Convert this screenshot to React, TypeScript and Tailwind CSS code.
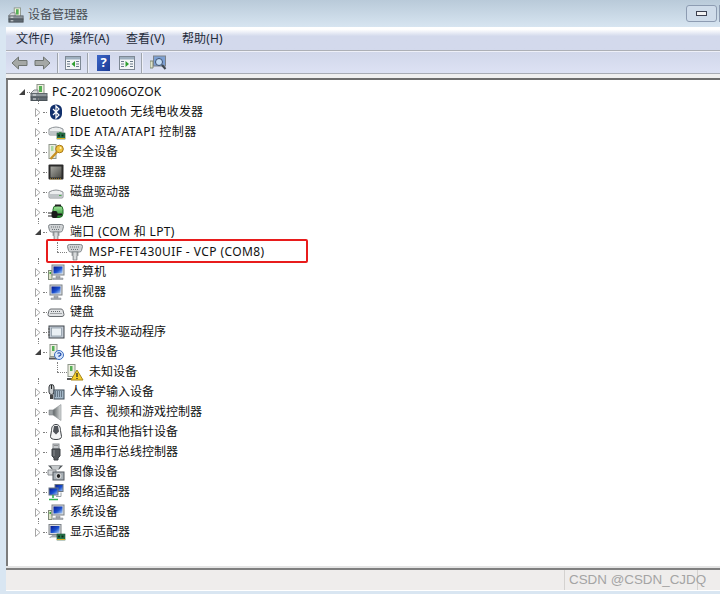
import React from 'react';

type IconName =
  | 'pc' | 'bluetooth' | 'ide' | 'key' | 'cpu' | 'disk' | 'battery' | 'port' | 'computer' | 'monitor'
  | 'keyboard' | 'memory' | 'otherq' | 'otherw' | 'hid' | 'sound' | 'mouse' | 'usb' | 'camera' | 'network'
  | 'system' | 'display';

type Row = { label: string; icon: IconName; state?: 'open' | 'closed' | 'root' | 'child'; track?: string };

const ROWS: Row[] = [
  { label: 'PC-20210906OZOK', icon: 'pc', state: 'root', track: 'tracking-[0.2px]' },
  { label: 'Bluetooth 无线电收发器', icon: 'bluetooth', track: 'tracking-[0.15px]' },
  { label: 'IDE ATA/ATAPI 控制器', icon: 'ide', track: 'tracking-[0.5px]' },
  { label: '安全设备', icon: 'key' },
  { label: '处理器', icon: 'cpu' },
  { label: '磁盘驱动器', icon: 'disk' },
  { label: '电池', icon: 'battery' },
  { label: '端口 (COM 和 LPT)', icon: 'port', state: 'open', track: 'tracking-[0.3px]' },
  { label: 'MSP-FET430UIF - VCP (COM8)', icon: 'port', state: 'child', track: 'tracking-[0.42px]' },
  { label: '计算机', icon: 'computer' },
  { label: '监视器', icon: 'monitor' },
  { label: '键盘', icon: 'keyboard' },
  { label: '内存技术驱动程序', icon: 'memory' },
  { label: '其他设备', icon: 'otherq', state: 'open' },
  { label: '未知设备', icon: 'otherw', state: 'child' },
  { label: '人体学输入设备', icon: 'hid' },
  { label: '声音、视频和游戏控制器', icon: 'sound' },
  { label: '鼠标和其他指针设备', icon: 'mouse' },
  { label: '通用串行总线控制器', icon: 'usb' },
  { label: '图像设备', icon: 'camera' },
  { label: '网络适配器', icon: 'network' },
  { label: '系统设备', icon: 'system' },
  { label: '显示适配器', icon: 'display' },
];

const Defs = () => (
  <defs>
    <linearGradient id="scr" x1="0" y1="0" x2="1" y2="1">
      <stop offset="0" stopColor="#06188c" />
      <stop offset=".55" stopColor="#1a50d0" />
      <stop offset="1" stopColor="#b4d4f4" />
    </linearGradient>
    <linearGradient id="chip" x1="0" y1="0" x2="1" y2="1">
      <stop offset="0" stopColor="#a8a8a2" />
      <stop offset="1" stopColor="#4a4a46" />
    </linearGradient>
    <linearGradient id="metal" x1="0" y1="0" x2="1" y2="0">
      <stop offset="0" stopColor="#8a8e90" />
      <stop offset=".5" stopColor="#e8eaeb" />
      <stop offset="1" stopColor="#8a8e90" />
    </linearGradient>
    <linearGradient id="cone" x1="0" y1="0" x2="1" y2="0">
      <stop offset="0" stopColor="#5c6264" />
      <stop offset="1" stopColor="#dadddd" />
    </linearGradient>
    <linearGradient id="batt" x1="0" y1="0" x2="0" y2="1">
      <stop offset="0" stopColor="#a8e8a0" />
      <stop offset="1" stopColor="#1e8a2a" />
    </linearGradient>
  </defs>
);

const Screen = ({ x = 3, y = 1 }: { x?: number; y?: number }) => (
  <g>
    <rect x={x} y={y} width="12" height="10" fill="#d8dadc" stroke="#7c8288" />
    <rect x={x + 1.5} y={y + 1.5} width="9" height="7" fill="url(#scr)" />
    <path d={`M${x + 4} ${y + 11}h4v2h-4zM${x + 1} ${y + 13}h10v1.5h-10z`} fill="#b4b8bc" stroke="#80868c" strokeWidth=".5" />
  </g>
);

const Tower = ({ x = 0 }: { x?: number }) => (
  <g>
    <rect x={x + .5} y="6.5" width="3.5" height="9" fill="#dfe3c8" stroke="#7f8a78" />
    <path d={`M${x + 1.5} 8h1.5v2h-1.5z`} fill="#3aa63a" />
  </g>
);

const Drive = ({ y = 7 }: { y?: number }) => (
  <g>
    <path d={`M1 ${y + 2}q7-4 14 0v5q0 1-1 1H2q-1 0-1-1z`} fill="#eceeef" stroke="#8d9296" />
    <path d={`M1.5 ${y + 4}h13v3h-13z`} fill="#bfc4c7" />
    <path d={`M11 ${y + 5.5}h2.5`} stroke="#4caa4c" />
  </g>
);

const Card = ({ x = 8, y = 10 }: { x?: number; y?: number }) => (
  <g>
    <rect x={x} y={y} width="8" height="6" fill="#2a7a4e" stroke="#1c4e34" strokeWidth=".6" />
    <path d={`M${x + 1} ${y + 1.5}h2v2h-2zM${x + 4.5} ${y + 1.5}h2v2h-2z`} fill="#0e2a1c" />
    <path d={`M${x} ${y + 5.5}h8`} stroke="#e0b020" />
  </g>
);

const PcBody = () => (
  <g>
    <rect x="7" y="0.5" width="7" height="10" fill="#eef0dc" stroke="#8d958a" />
    <rect x="9" y="2" width="3" height="6" fill="#55b055" />
    <path d="M1 9l3-3h4v4H1z" fill="#d6d8da" stroke="#7d8286" />
    <rect x="1" y="9.5" width="16" height="3.5" fill="#8e969c" stroke="#5e666c" />
    <rect x="1" y="13" width="16" height="3.5" fill="#606a72" stroke="#4a5258" />
    <path d="M3 11h3M3 15h3" stroke="#e8eaec" />
  </g>
);

function Icon({ name }: { name: IconName }) {
  const inner: Record<IconName, React.ReactNode> = {
    pc: <PcBody />,
    bluetooth: (
      <g>
        <rect x="2" y="0.5" width="12" height="15" rx="5.5" fill="#12306c" />
        <path d="M5 5l6 6-3 3V2l3 3-6 6" fill="none" stroke="#fff" strokeWidth="1.2" />
      </g>
    ),
    ide: <g><Drive y={3} /><Card x={9} y={9} /></g>,
    key: (
      <g>
        <rect x="1" y="0.5" width="7" height="14" fill="#eceee0" stroke="#8d958a" />
        <rect x="3" y="2" width="2.5" height="5" fill="#a8d8a0" />
        <circle cx="11.5" cy="5" r="3.8" fill="#f2c440" stroke="#a87818" />
        <circle cx="12.5" cy="4" r="1" fill="#fff2c0" />
        <path d="M9 8l-6.5 7" stroke="#c89020" strokeWidth="2.2" />
      </g>
    ),
    cpu: (
      <g>
        <rect x="0.5" y="0.5" width="15" height="15" rx="1" fill="#2a2a2a" />
        <rect x="2.5" y="2.5" width="11" height="11" fill="url(#chip)" />
        <path d="M2 15h12" stroke="#d0a030" strokeDasharray="1 1" />
      </g>
    ),
    disk: <Drive y={6} />,
    battery: (
      <g>
        <rect x="5" y="1.5" width="10" height="12" rx="4" fill="url(#batt)" stroke="#1e6a24" />
        <path d="M7 0.5h6v2H7z" fill="#222" />
        <path d="M0 9h4M0 12h4" stroke="#222" strokeWidth="1.2" />
        <rect x="3.5" y="7" width="6" height="7" rx="2" fill="#1a1a1a" />
        <path d="M9 10.5h5" stroke="#1a1a1a" strokeWidth="2" />
      </g>
    ),
    port: (
      <g>
        <path d="M0.5 2.5q0-2 2-2h11q2 0 2 2l-1 4q-.5 1.5-2 1.5H3.5q-1.5 0-2-1.5z" fill="#cfd2d4" stroke="#7e8488" />
        <path d="M3 3h10M4 5.5h8" stroke="#6c7276" strokeDasharray="1 1" />
        <path d="M5 8h6v3.5l-1 1v3.5H6v-3.5l-1-1z" fill="url(#metal)" stroke="#7e8488" strokeWidth=".7" />
      </g>
    ),
    computer: <g><Tower /><Screen x={4} /></g>,
    monitor: <Screen x={2} />,
    keyboard: (
      <g>
        <path d="M3 5h10q1.5 0 2 1.5l1 4q0 2-2 2H2q-2 0-2-2l1-4Q1.5 5 3 5z" fill="#e2e4e6" stroke="#686c70" />
        <path d="M3 7.5h10M2.5 9.5h11" stroke="#5f6468" strokeDasharray="1 1" />
      </g>
    ),
    memory: (
      <g>
        <rect x="1" y="2" width="15" height="12" fill="#c4ccd6" stroke="#3e444a" />
        <rect x="3.5" y="4" width="10" height="8" fill="#eaf0f4" stroke="#84929e" strokeWidth=".7" />
        <path d="M0 5h2M0 8h2M0 11h2" stroke="#555" />
      </g>
    ),
    otherq: (
      <g>
        <rect x="2" y="0.5" width="7" height="12" fill="#eceee0" stroke="#8d958a" />
        <rect x="4" y="2" width="2.5" height="5" fill="#55b055" />
        <path d="M1 14.5h8" stroke="#555" strokeWidth="2" />
        <circle cx="11" cy="11" r="4.5" fill="#d8e6fa" stroke="#3a6cc0" />
        <path d="M9.5 9.5q1.5-1.5 3 0t-1.5 2.5v1" fill="none" stroke="#1c48a8" strokeWidth="1.1" />
      </g>
    ),
    otherw: (
      <g>
        <rect x="1" y="0.5" width="7" height="12" fill="#eceee0" stroke="#8d958a" />
        <rect x="3" y="2" width="2.5" height="5" fill="#55b055" />
        <path d="M0 15h6" stroke="#555" strokeWidth="2" />
        <path d="M10 6l6 10H4z" fill="#f5cf2c" stroke="#a8861a" />
        <path d="M10 9v4M10 14v1" stroke="#222" strokeWidth="1.2" />
      </g>
    ),
    hid: (
      <g>
        <rect x="1" y="0.5" width="5" height="10" rx="2.5" fill="#c8ccce" stroke="#33373a" />
        <path d="M3.5 1v4" stroke="#222" />
        <path d="M2 11h3v4H2z" fill="#444" />
        <rect x="6" y="6" width="10" height="9" fill="#a4b8c8" stroke="#3e4c58" />
        <path d="M7 8h8M7 10h8M7 12h8" stroke="#26323e" strokeDasharray="1 1" />
      </g>
    ),
    sound: (
      <g>
        <path d="M1 6h4v5H1z" fill="#9ca2a4" stroke="#7c8284" strokeWidth=".6" />
        <path d="M5 6l8-5.5v16L5 11z" fill="url(#cone)" stroke="#8c9294" strokeWidth=".6" />
      </g>
    ),
    mouse: (
      <g>
        <path d="M8 0.5c3.5 0 4.5 3 4.5 6l1 6c0 2-2 3-5.5 3s-5.5-1-5.5-3l1-6c0-3 1-6 4.5-6z" fill="#f4f5f6" stroke="#3c4044" />
        <path d="M6 2h4l1 5.5-3 3-3-3z" fill="#50545a" />
      </g>
    ),
    usb: (
      <g>
        <rect x="5" y="0" width="6" height="5" fill="#c6c9cc" stroke="#8a8e92" />
        <path d="M6.5 1.5h1M8.5 1.5h1" stroke="#555" />
        <path d="M4 5h8v7l-2 2v2H6v-2l-2-2z" fill="#55595d" stroke="#3c4044" />
        <path d="M6 6v6" stroke="#8a8e92" />
      </g>
    ),
    camera: (
      <g>
        <path d="M0 1.5h15l-4 4H4z" fill="#50565a" />
        <path d="M3 2l2 4h5l2-4z" fill="#c6cacc" />
        <path d="M0 6h8v5H0z" fill="#d6d9db" stroke="#8a8e92" />
        <rect x="5" y="8" width="11" height="8" fill="#a8b0b6" stroke="#545a60" />
        <circle cx="10.5" cy="12" r="2.4" fill="#222" stroke="#eee" />
      </g>
    ),
    network: (
      <g>
        <rect x="7" y="0.5" width="8" height="7" fill="url(#scr)" stroke="#6a7480" />
        <rect x="1" y="4" width="9" height="7" fill="url(#scr)" stroke="#6a7480" />
        <path d="M5 11v3M1 15.5h9" stroke="#30b050" strokeWidth="1.6" />
        <path d="M8 12.5h5v-4" fill="none" stroke="#9aa2a8" />
      </g>
    ),
    system: <g><Tower /><Screen x={4} /></g>,
    display: (
      <g>
        <rect x="1" y="0.5" width="12" height="10" fill="#d8dadc" stroke="#7c8288" />
        <rect x="2.5" y="2" width="9" height="7" fill="url(#scr)" />
        <path d="M4 11h5v2H2v1" fill="#b4b8bc" stroke="#80868c" strokeWidth=".6" />
        <Card x={9} y={10} />
      </g>
    ),
  };
  return (
    <svg width="16" height="16" viewBox="0 0 16 16" className="shrink-0 overflow-visible">
      <Defs />
      {inner[name]}
    </svg>
  );
}

// expander triangles and dotted connectors of one row
function Expander({ state }: { state?: Row['state'] }) {
  if (state === 'open') {
    return (
      <svg width="8" height="8" viewBox="0 0 8 8" className="shrink-0">
        <path d="M1 7h6V1z" fill="#404040" />
      </svg>
    );
  }
  return (
    <svg width="8" height="11" viewBox="0 0 8 11" className="shrink-0">
      <path d="M1.5 1.5l4.5 4-4.5 4z" fill="#fff" stroke="#a6a6a6" />
    </svg>
  );
}

function TreeRow({ row }: { row: Row }) {
  if (row.state === 'root') {
    return (
      <div className="relative flex h-5 items-center">
        <span className="flex w-[8px] justify-center"><Expander state="open" /></span>
        <span className="ml-[1px] w-[3px] border-t border-dotted border-[#808080]" />
        <span className="flex w-[16px]"><Icon name={row.icon} /></span>
        <span className={`ml-[6px] text-[12px] text-[#111] ${row.track ?? ''}`}>{row.label}</span>
      </div>
    );
  }
  if (row.state === 'child') {
    return (
      <div className="relative flex h-5 items-center pl-[39px]">
        <span className="absolute left-[39px] top-0 h-[10px] border-l border-dotted border-[#808080]" />
        <span className="w-[10px] border-t border-dotted border-[#808080]" />
        <span className="flex w-[16px]"><Icon name={row.icon} /></span>
        <span className={`ml-[6px] text-[12px] text-[#111] ${row.track ?? ''}`}>{row.label}</span>
      </div>
    );
  }
  return (
    <div className="relative flex h-5 items-center pl-[16px]">
      <span className="absolute left-[20px] top-[-4px] h-[6px] border-l border-dotted border-[#808080]" />
      <span className="flex w-[8px] items-center justify-center"><Expander state={row.state} /></span>
      <span className="ml-[1px] w-[4px] border-t border-dotted border-[#808080]" />
      <span className="ml-[1px] flex w-[17px]"><Icon name={row.icon} /></span>
      <span className={`ml-[5px] text-[12px] text-[#111] ${row.track ?? ''}`}>{row.label}</span>
    </div>
  );
}

const Sep = () => <span className="block h-[20px] w-px bg-[#9ea4ac] shadow-[1px_0_0_#eef0f8]" />;

const PaneIcon = ({ arrow }: { arrow: 'left' | 'right' }) => (
  <svg width="16" height="14" viewBox="0 0 16 14" className="block">
    <rect x=".5" y=".5" width="15" height="13" fill="#f4f6f8" stroke="#7d8894" />
    <path d="M1 1h14v2.5H1z" fill="#9fb0c0" />
    <path d="M2 5.5h3M2 8h3M2 10.5h3M11 5.5h3M11 8h3M11 10.5h3" stroke="#6a7a8a" />
    {arrow === 'left'
      ? <path d="M6.5 8l3.5-3v6z" fill="#30a030" />
      : <path d="M10 8L6.5 5v6z" fill="#30a030" />}
  </svg>
);

const NavArrow = ({ dir }: { dir: 'left' | 'right' }) => (
  <svg width="17" height="14" viewBox="0 0 17 14" className="block">
    <path
      d={dir === 'left' ? 'M1 7l6.5-6v3.5H16v5H7.5V13z' : 'M16 7L9.5 1v3.5H1v5h8.5V13z'}
      fill="#a5a8a6"
      stroke="#6f7471"
    />
  </svg>
);

export default function App() {
  return (
    <div
      className="flex h-[594px] w-[720px] flex-col overflow-hidden bg-[#d9e6f2] text-[12px]"
      style={{ fontFamily: '"Noto Sans", "Noto Sans CJK SC", sans-serif' }}
    >
      {/* title bar */}
      <div className="flex h-[27px] items-center bg-gradient-to-b from-[#b9cad9] to-[#d7e5f1] pl-[8px] pt-[3px]">
        <span className="w-[20px]"><svg width="16" height="16" viewBox="0 0 18 17" className="block"><PcBody /></svg></span>
        <span className="text-[12px] text-[#4a4f55]">设备管理器</span>
        <span className="mb-[3px] ml-auto flex h-[17px] w-[31px] items-center justify-center rounded-[3px] border border-[#8d9cb2] bg-[#cfdcea]">
          <span className="h-[5px] w-[11px] border border-[#3c4050] bg-[#f2f2f2]" />
        </span>
        <span className="mb-[3px] ml-[2px] h-[17px] w-px bg-[#8d9cb2]" />
      </div>

      <div className="flex flex-1 flex-col pl-[6px]">
        {/* menu bar */}
        <div className="flex h-[23px] items-center gap-[16px] bg-gradient-to-b from-white from-[10%] to-[#d3d9ec] to-[40%] pl-[10px] text-[#1f2b3a]">
          <span className="w-[38px] whitespace-nowrap">文件(F)</span>
          <span className="w-[40px] whitespace-nowrap tracking-[0.1px]">操作(A)</span>
          <span className="w-[40px] whitespace-nowrap tracking-[0.1px]">查看(V)</span>
          <span className="w-[40px] whitespace-nowrap tracking-[0.1px]">帮助(H)</span>
        </div>
        <div className="h-px bg-[#adb0b6]" />

        {/* toolbar */}
        <div className="flex h-[22px] items-center border-t border-[#eef0f8] bg-gradient-to-b from-[#d1d7ea] to-[#dde2f4] pl-[5px]">
          <NavArrow dir="left" />
          <span className="ml-[6px]"><NavArrow dir="right" /></span>
          <span className="ml-[6px]"><Sep /></span>
          <span className="ml-[7px]"><PaneIcon arrow="left" /></span>
          <span className="ml-[6px]"><Sep /></span>
          <span className="ml-[9px] flex h-[16px] w-[13px] items-center justify-center bg-gradient-to-br from-[#3c66c8] to-[#1c3a94] text-[13px] font-bold leading-none text-white">?</span>
          <span className="ml-[9px]"><PaneIcon arrow="right" /></span>
          <span className="ml-[6px]"><Sep /></span>
          <span className="ml-[8px]">
            <svg width="17" height="16" viewBox="0 0 17 16" className="block">
              <path d="M0 6h3v7H0z" fill="#dfe3c8" stroke="#7f8a78" />
              <rect x="3.5" y="1" width="12" height="10" fill="#7da0d4" stroke="#7c8288" />
              <circle cx="9" cy="7" r="3.5" fill="#c4dcf4" stroke="#3c5070" />
              <path d="M12 10l3.5 4" stroke="#404850" strokeWidth="2" />
            </svg>
          </span>
        </div>
        <div className="h-[7px] border-b-2 border-t border-[#a8acb4] border-b-[#6e6e6e] bg-[#f0f0f0]" />

        {/* device tree */}
        <div className="flex min-h-0 flex-1 flex-col border-l-2 border-[#7c7c7c] bg-white pl-[10px] pt-[2px]">
          <div className="relative">
            {ROWS.map((row, i) => (
              <TreeRow key={i} row={row} />
            ))}
            {/* red mark over the COM8 row */}
            <div className="absolute left-[28px] top-[157px] h-[24px] w-[262px] rounded-[2px] border-2 border-[#e81c1c]" />
          </div>
        </div>

        {/* status bar */}
        <div className="h-[2px] bg-[#e4e4e4]" />
        <div className="flex h-[22px] items-center border-t-2 border-[#7f7f7f] bg-[#efedec] pl-[558px]">
          <span className="flex h-full w-[134px] items-center whitespace-nowrap border-x border-[#d4d2d0] pl-[4px] text-[13.4px] text-[#a4a4a4]" style={{ fontFamily: '"Liberation Sans", sans-serif' }}>
            CSDN @CSDN_CJDQ
          </span>
        </div>
        <div className="h-px bg-white" />
      </div>
      <div className="h-[3px]" />
    </div>
  );
}
